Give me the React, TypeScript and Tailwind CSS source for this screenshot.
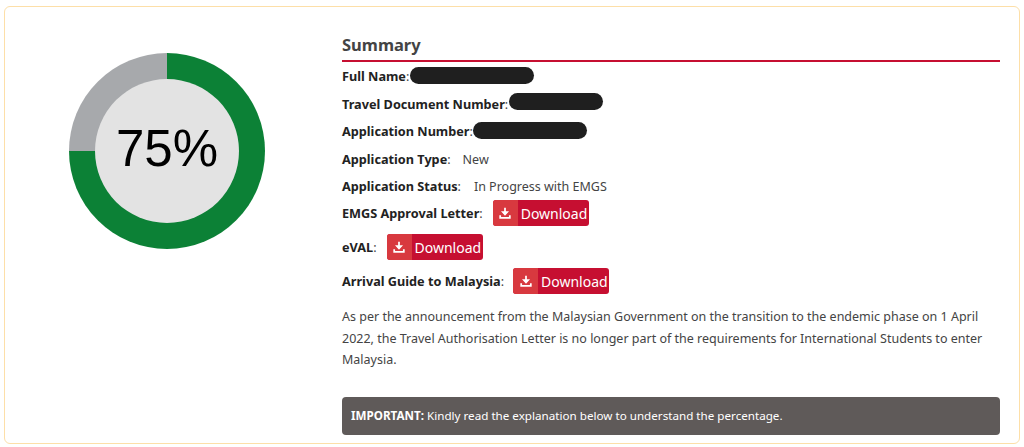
import React from "react";

function DlIcon() {
  return (
    <svg width="14" height="14" viewBox="0 0 16 16" fill="none" stroke="#fff" strokeWidth="2">
      <path d="M8 2v7" />
      <path d="M5 6.8 8 10l3-3.2z" fill="#fff" strokeWidth="1.4" />
      <path d="M2.5 10.5v3h11v-3" />
    </svg>
  );
}

function Dl() {
  return (
    <span className="inline-flex h-[26px] w-[96px] items-stretch overflow-hidden rounded-[3px] bg-[#c60f31] text-white">
      <span className="flex w-[25px] items-center justify-center bg-[#d8393f]">
        <DlIcon />
      </span>
      <span className="pl-[3px] pt-[1px] text-[14px] leading-[26px]">Download</span>
    </span>
  );
}

function Row({ label, children, cls, lift }: { label: string; children?: React.ReactNode; cls: string; lift?: boolean }) {
  return (
    <div className={"flex items-center " + cls}>
      <b className={"text-[12.7px] font-bold text-[#222] " + (lift ? "pt-[2px]" : "")}>{label}</b>
      <span className={lift ? "pt-[2px]" : ""}>:</span>
      {children}
    </div>
  );
}

function Redact({ w, y }: { w: string; y: string }) {
  return <span className={"h-[17px] rounded-full bg-[#1f1f1f] " + w + " " + y} />;
}

export default function App() {
  return (
    <div className="h-[447px] w-[1024px] overflow-hidden bg-white pl-[4px] pt-[6px] font-['Noto_Sans',sans-serif] text-[12.5px] text-[#444]">
      <div className="flex h-[438px] w-[1016px] rounded-[6px] border border-[#fddfa8]">
        <div className="w-[337px] shrink-0 pl-[64px] pt-[46px]">
          <div className="relative h-[196px] w-[196px] rounded-full bg-[conic-gradient(#0c8136_0_75%,#a7a9ac_75%_100%)]">
            <div className="absolute inset-[26px] flex items-center justify-center rounded-full bg-[#e3e3e3] pb-[4px] font-['Liberation_Sans',sans-serif] text-[51px] text-black">
              75%
            </div>
          </div>
        </div>
        <div className="w-[658px] pt-[27px]">
          <div className="h-[28px] border-b-2 border-[#c60f31] text-[16.5px] font-bold leading-[22px] text-[#444]">Summary</div>
          <Row label="Full Name" cls="mt-[4px] h-[22px]">
            <Redact w="w-[124px] ml-[1px]" y="-mt-[4px]" />
          </Row>
          <Row label="Travel Document Number" cls="mt-[6px] h-[22px]">
            <Redact w="w-[94px] ml-[1px]" y="-mt-[8px]" />
          </Row>
          <Row label="Application Number" cls="mt-[5px] h-[22px]">
            <Redact w="w-[114px]" y="-mt-[3px]" />
          </Row>
          <Row label="Application Type" cls="mt-[6px] h-[22px]">
            <span className="ml-[12px]">New</span>
          </Row>
          <Row label="Application Status" cls="mt-[5px] h-[22px]">
            <span className="ml-[13px]">In Progress with EMGS</span>
          </Row>
          <Row label="EMGS Approval Letter" cls="mt-[2px] h-[26px]" lift>
            <span className="ml-[10px]"><Dl /></span>
          </Row>
          <Row label="eVAL" cls="mt-[8px] h-[26px]" lift>
            <span className="ml-[10px]"><Dl /></span>
          </Row>
          <Row label="Arrival Guide to Malaysia" cls="mt-[8px] h-[26px]" lift>
            <span className="ml-[9px]"><Dl /></span>
          </Row>
          <p className="mt-[12px] leading-[21.7px]">
            As per the announcement from the Malaysian Government on the transition to the endemic phase on 1 April 2022, the Travel Authorisation Letter is no longer part of the requirements for International Students to enter Malaysia.
          </p>
          <div className="mt-[26px] flex h-[38px] items-center rounded-[4px] bg-[#5f5a59] px-[9px] text-[11.65px] text-white">
            <b className="mr-[3px]">IMPORTANT:</b> Kindly read the explanation below to understand the percentage.
          </div>
        </div>
      </div>
    </div>
  );
}
